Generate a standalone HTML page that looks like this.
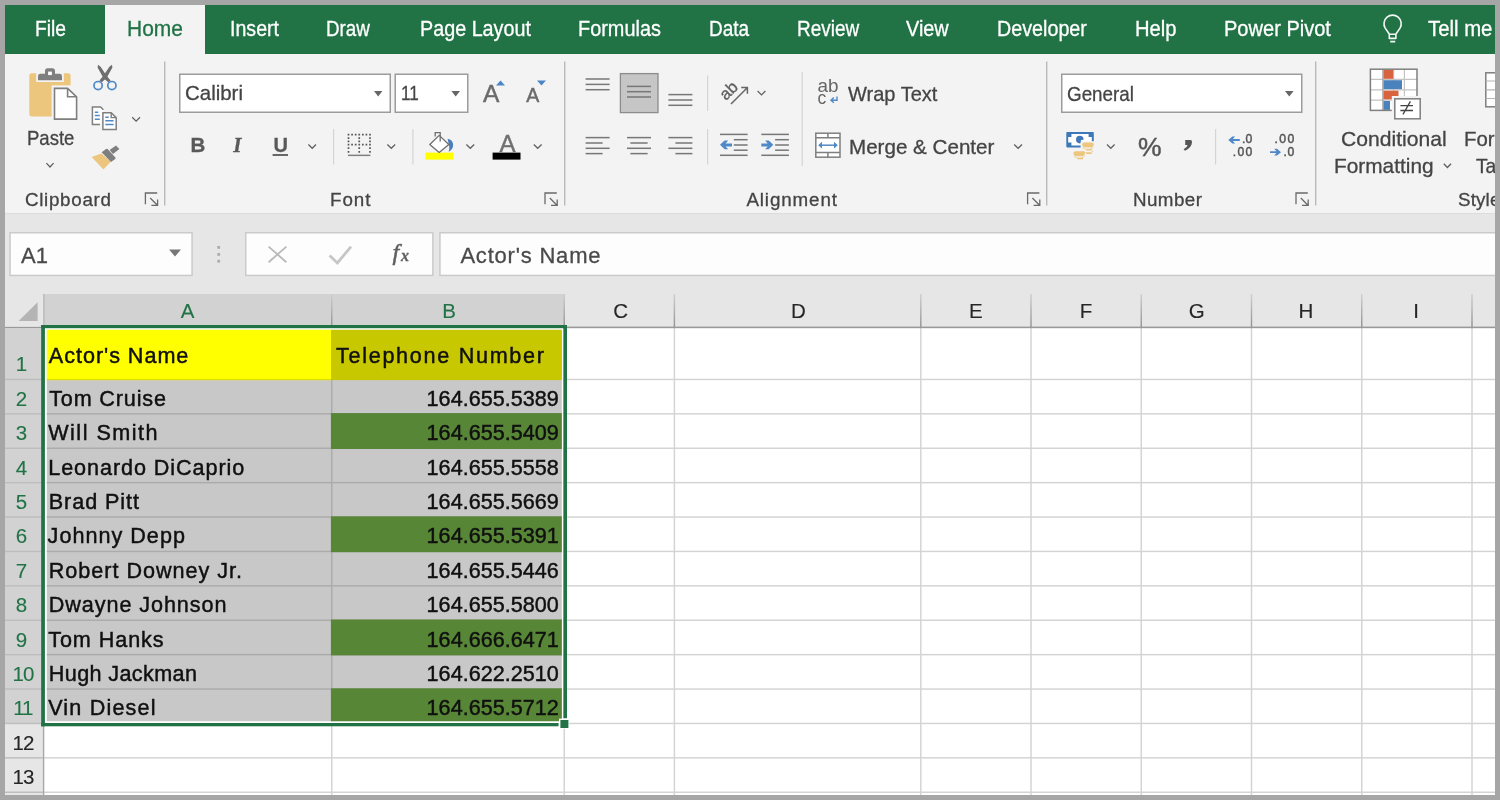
<!DOCTYPE html>
<html><head><meta charset="utf-8"><title>Excel</title>
<style>
html,body{margin:0;padding:0;}
body{width:1500px;height:800px;overflow:hidden;background:#a6a6a6;position:relative;font-family:"Liberation Sans",sans-serif;}
.a{position:absolute;display:block;}
.t{position:absolute;white-space:pre;display:block;}
#w{filter:blur(0.45px);position:absolute;left:5px;top:5px;width:1490px;height:790px;overflow:hidden;background:#fff;}
#o{position:absolute;left:-5px;top:-5px;width:1500px;height:800px;}
</style></head><body><div id="w"><div id="o">
<svg class="a" style="left:0;top:0" width="1500" height="800" viewBox="0 0 1500 800">
<defs><linearGradient id="hg" x1="0" y1="0" x2="0" y2="1"><stop offset="0" stop-color="#cfcfcf"/><stop offset="1" stop-color="#929292"/></linearGradient></defs>
<rect x="5" y="5" width="1490" height="49.3" fill="#217346"/>
<rect x="105" y="5" width="100" height="49.3" fill="#f3f3f3"/>
<rect x="5" y="54" width="1490" height="159" fill="#f3f3f3"/>
<rect x="5" y="213" width="1490" height="1" fill="#dcdcdc"/>
<rect x="164" y="61.5" width="1.4" height="144" fill="#b9b9b9"/>
<rect x="564" y="61.5" width="1.4" height="144" fill="#b9b9b9"/>
<rect x="1046" y="61.5" width="1.4" height="144" fill="#b9b9b9"/>
<rect x="1315" y="61.5" width="1.4" height="144" fill="#b9b9b9"/>
<rect x="333" y="129" width="1.2" height="35.5" fill="#d4d4d4"/>
<rect x="412.3" y="129" width="1.2" height="35.5" fill="#d4d4d4"/>
<rect x="707" y="75.5" width="1.2" height="35.5" fill="#d4d4d4"/>
<rect x="707" y="129" width="1.2" height="35.5" fill="#d4d4d4"/>
<rect x="801.6" y="72" width="1.2" height="94" fill="#d4d4d4"/>
<rect x="1215" y="129" width="1.2" height="35.5" fill="#d4d4d4"/>
<rect x="179.75" y="74.25" width="210.5" height="38" fill="#fff" stroke="#9c9c9c" stroke-width="1.5"/>
<rect x="395.25" y="74.25" width="72.5" height="38" fill="#fff" stroke="#9c9c9c" stroke-width="1.5"/>
<rect x="1061.75" y="74.25" width="240" height="38" fill="#fff" stroke="#9c9c9c" stroke-width="1.5"/>
<g transform="translate(374,91)"><path d="M0 0H8.4L4.2 5.4Z" fill="#666"/></g>
<g transform="translate(451.4,91)"><path d="M0 0H8.6L4.3 5.4Z" fill="#666"/></g>
<g transform="translate(1285,91)"><path d="M0 0H8.6L4.3 5.4Z" fill="#666"/></g>
<rect x="272.6" y="154.1" width="15.4" height="1.8" fill="#595959"/>
<rect x="5" y="214" width="1490" height="80" fill="#e6e6e6"/>
<rect x="10.05" y="232.75" width="182" height="42.7" fill="#fdfdfd" stroke="#cacaca" stroke-width="1.5"/>
<rect x="245.75" y="232.75" width="187.1" height="42.7" fill="#fdfdfd" stroke="#cacaca" stroke-width="1.5"/>
<rect x="439.95" y="232.75" width="1059.3" height="42.7" fill="#fdfdfd" stroke="#cacaca" stroke-width="1.5"/>
<g transform="translate(169,249.6)"><path d="M0 0H12L6 6.8Z" fill="#777"/></g>
<rect x="217.3" y="246" width="2.8" height="2.8" fill="#adadad"/>
<rect x="217.3" y="253" width="2.8" height="2.8" fill="#adadad"/>
<rect x="217.3" y="259.8" width="2.8" height="2.8" fill="#adadad"/>
<rect x="5" y="294" width="1490" height="501" fill="#fff"/>
<rect x="331.03" y="327" width="1.44" height="468" fill="#d3d3d3"/>
<rect x="563.53" y="327" width="1.44" height="468" fill="#d3d3d3"/>
<rect x="673.68" y="327" width="1.44" height="468" fill="#d3d3d3"/>
<rect x="920.08" y="327" width="1.44" height="468" fill="#d3d3d3"/>
<rect x="1030.28" y="327" width="1.44" height="468" fill="#d3d3d3"/>
<rect x="1140.53" y="327" width="1.44" height="468" fill="#d3d3d3"/>
<rect x="1250.78" y="327" width="1.44" height="468" fill="#d3d3d3"/>
<rect x="1361.03" y="327" width="1.44" height="468" fill="#d3d3d3"/>
<rect x="1471.28" y="327" width="1.44" height="468" fill="#d3d3d3"/>
<rect x="1581.28" y="327" width="1.44" height="468" fill="#d3d3d3"/>
<rect x="43" y="378.73" width="1452" height="1.44" fill="#d3d3d3"/>
<rect x="43" y="413.13" width="1452" height="1.44" fill="#d3d3d3"/>
<rect x="43" y="447.53" width="1452" height="1.44" fill="#d3d3d3"/>
<rect x="43" y="481.93" width="1452" height="1.44" fill="#d3d3d3"/>
<rect x="43" y="516.33" width="1452" height="1.44" fill="#d3d3d3"/>
<rect x="43" y="550.73" width="1452" height="1.44" fill="#d3d3d3"/>
<rect x="43" y="585.13" width="1452" height="1.44" fill="#d3d3d3"/>
<rect x="43" y="619.53" width="1452" height="1.44" fill="#d3d3d3"/>
<rect x="43" y="653.93" width="1452" height="1.44" fill="#d3d3d3"/>
<rect x="43" y="688.33" width="1452" height="1.44" fill="#d3d3d3"/>
<rect x="43" y="722.73" width="1452" height="1.44" fill="#d3d3d3"/>
<rect x="43" y="757.13" width="1452" height="1.44" fill="#d3d3d3"/>
<rect x="43" y="791.53" width="1452" height="1.44" fill="#d3d3d3"/>
<rect x="5" y="294" width="1490" height="33" fill="#e6e6e6"/>
<rect x="44" y="294" width="521" height="33" fill="#d2d2d2"/>
<rect x="5" y="326.6" width="1490" height="1.6" fill="#999"/>
<rect x="331.03" y="294" width="1.44" height="33" fill="url(#hg)"/>
<rect x="563.53" y="294" width="1.44" height="33" fill="url(#hg)"/>
<rect x="673.68" y="294" width="1.44" height="33" fill="url(#hg)"/>
<rect x="920.08" y="294" width="1.44" height="33" fill="url(#hg)"/>
<rect x="1030.28" y="294" width="1.44" height="33" fill="url(#hg)"/>
<rect x="1140.53" y="294" width="1.44" height="33" fill="url(#hg)"/>
<rect x="1250.78" y="294" width="1.44" height="33" fill="url(#hg)"/>
<rect x="1361.03" y="294" width="1.44" height="33" fill="url(#hg)"/>
<rect x="1471.28" y="294" width="1.44" height="33" fill="url(#hg)"/>
<rect x="1581.28" y="294" width="1.44" height="33" fill="url(#hg)"/>
<rect x="5" y="328" width="38" height="467" fill="#e6e6e6"/>
<rect x="5" y="328" width="38" height="395" fill="#d2d2d2"/>
<rect x="42.9" y="328" width="1.4" height="467" fill="#a8a8a8"/>
<rect x="5" y="378.73" width="38" height="1.44" fill="#bdbdbd"/>
<rect x="5" y="413.13" width="38" height="1.44" fill="#bdbdbd"/>
<rect x="5" y="447.53" width="38" height="1.44" fill="#bdbdbd"/>
<rect x="5" y="481.93" width="38" height="1.44" fill="#bdbdbd"/>
<rect x="5" y="516.33" width="38" height="1.44" fill="#bdbdbd"/>
<rect x="5" y="550.73" width="38" height="1.44" fill="#bdbdbd"/>
<rect x="5" y="585.13" width="38" height="1.44" fill="#bdbdbd"/>
<rect x="5" y="619.53" width="38" height="1.44" fill="#bdbdbd"/>
<rect x="5" y="653.93" width="38" height="1.44" fill="#bdbdbd"/>
<rect x="5" y="688.33" width="38" height="1.44" fill="#bdbdbd"/>
<rect x="5" y="722.73" width="38" height="1.44" fill="#bdbdbd"/>
<rect x="5" y="757.13" width="38" height="1.44" fill="#bdbdbd"/>
<rect x="5" y="791.53" width="38" height="1.44" fill="#bdbdbd"/>
<rect x="5" y="294" width="38.2" height="32.7" fill="#e6e6e6"/>
<rect x="43.2" y="294" width="1.4" height="31" fill="#b8b8b8"/>
<g transform="translate(17,301)"><path d="M20.6 1.2V20H1.6Z" fill="#b4b4b4"/></g>
<rect x="44" y="328" width="519" height="395" fill="#fff"/>
<rect x="46.8" y="329.8" width="515" height="391.4" fill="#c8c8c8"/>
<rect x="46.8" y="413.13" width="515" height="1.44" fill="#ababab"/>
<rect x="46.8" y="447.53" width="515" height="1.44" fill="#ababab"/>
<rect x="46.8" y="481.93" width="515" height="1.44" fill="#ababab"/>
<rect x="46.8" y="516.33" width="515" height="1.44" fill="#ababab"/>
<rect x="46.8" y="550.73" width="515" height="1.44" fill="#ababab"/>
<rect x="46.8" y="585.13" width="515" height="1.44" fill="#ababab"/>
<rect x="46.8" y="619.53" width="515" height="1.44" fill="#ababab"/>
<rect x="46.8" y="653.93" width="515" height="1.44" fill="#ababab"/>
<rect x="46.8" y="688.33" width="515" height="1.44" fill="#ababab"/>
<rect x="331.03" y="379" width="1.44" height="342.2" fill="#ababab"/>
<rect x="46.8" y="329.8" width="284.2" height="50.3" fill="#ffff00"/>
<rect x="46.8" y="378.9" width="284.2" height="1.2" fill="#dede00"/>
<rect x="331" y="329.8" width="230.8" height="50.3" fill="#c8c800"/>
<rect x="330.9" y="413.1" width="230.9" height="35.9" fill="#578637"/>
<rect x="330.9" y="516.3" width="230.9" height="35.9" fill="#578637"/>
<rect x="330.9" y="619.5" width="230.9" height="35.9" fill="#578637"/>
<rect x="330.9" y="688.3" width="230.9" height="32.9" fill="#578637"/>
<rect x="41.2" y="325" width="525.8" height="3.2" fill="#217346"/>
<rect x="41.2" y="325" width="3.7" height="401.3" fill="#217346"/>
<rect x="41.2" y="723" width="517.3" height="3.3" fill="#217346"/>
<rect x="563.4" y="325" width="3.6" height="393.3" fill="#217346"/>
<rect x="559" y="718.6" width="10" height="10" fill="#fff"/>
<rect x="560.4" y="720" width="8" height="8" fill="#217346"/>
<g transform="translate(496,80.4)"><path d="M0 5.2L4.5 0L9 5.2Z" fill="#4a86c5"/></g>
<g transform="translate(537,80.4)"><path d="M0 0H9L4.5 5.2Z" fill="#4a86c5"/></g>
<rect x="29.3" y="73.2" width="41.3" height="43.2" rx="2.6" fill="#edc67e"/>
<rect x="36.2" y="72" width="27.6" height="10" fill="#f3f3f3"/>
<rect x="51.6" y="85.4" width="22" height="34" fill="#f3f3f3"/>
<path d="M38 80.2V76.2Q38 73.8 40.4 73.8H45V71Q45 68.3 47.7 68.3H52.3Q55 68.3 55 71V73.8H59.6Q62 73.8 62 76.2V80.2Z" fill="#7f7f7f"/>
<rect x="48.1" y="71.6" width="3.8" height="3.5" fill="#fff"/>
<path d="M54.5 88.4H67.6L76.6 96.8V119.1H54.5Z" fill="#fff" stroke="#7f7f7f" stroke-width="1.6"/>
<path d="M67.6 88.4V96.8H76.6" fill="none" stroke="#7f7f7f" stroke-width="1.6"/>
<path d="M46.4 163.1L50 167L53.6 163.1" fill="none" stroke="#606060" stroke-width="1.25"/>
<path d="M98 64.8L100.6 66.8L106.8 76L110.6 80.4L108.2 82.2L103.4 78L97.6 67.6Z" fill="#6e6e6e"/>
<path d="M112 64.8L109.4 66.8L103.2 76L99.4 80.4L101.8 82.2L106.6 78L112.4 67.6Z" fill="#6e6e6e"/>
<circle cx="98.1" cy="85.6" r="4.1" fill="none" stroke="#5089c7" stroke-width="1.7"/>
<circle cx="111.9" cy="85.6" r="4.1" fill="none" stroke="#5089c7" stroke-width="1.7"/>
<path d="M100 124.4H92.4V107H100.6L103.4 109.8" fill="#fff" stroke="#7f7f7f" stroke-width="1.5"/>
<path d="M94.8 112.2H98.3M94.8 115.6H99.8M94.8 119.2H99.8" stroke="#5089c7" stroke-width="1.5"/>
<path d="M102.9 112.8H111.2L116.2 117.6V129.4H102.9Z" fill="#fff" stroke="#7f7f7f" stroke-width="1.5"/>
<path d="M111.2 112.8V117.6H116.2" fill="none" stroke="#7f7f7f" stroke-width="1.4"/>
<path d="M105.3 117.3H108.8M105.3 120.8H113.6M105.3 124.5H113.6" stroke="#5089c7" stroke-width="1.5"/>
<path d="M132.2 117.2L136.1 121.1L140 117.2" fill="none" stroke="#606060" stroke-width="1.25"/>
<path d="M91.7 157L101.3 153.5L110.8 161.7L103.4 169.6Z" fill="#edc67e"/>
<path d="M101.6 152.2L106.4 148.8Q107 148.4 107.6 149L115.4 157.6Q116 158.4 115.2 159L111 162Z" fill="#7f7f7f"/>
<path d="M109.6 150L116 145.6L119.4 149L113 154Z" fill="#7f7f7f"/>
<path d="M145.4 204.2V193H157.2M150.2 198L157.4 205.2M157.6 199.4V205.4H151.4" fill="none" stroke="#6a6a6a" stroke-width="1.3"/>
<path d="M545 204.2V193H556.8M549.8 198L557 205.2M557.2 199.4V205.4H551" fill="none" stroke="#6a6a6a" stroke-width="1.3"/>
<path d="M1027.6 204.2V193H1039.4M1032.4 198L1039.6 205.2M1039.8 199.4V205.4H1033.6" fill="none" stroke="#6a6a6a" stroke-width="1.3"/>
<path d="M1296 204.2V193H1307.8M1300.8 198L1308 205.2M1308.2 199.4V205.4H1302" fill="none" stroke="#6a6a6a" stroke-width="1.3"/>
<path d="M308.4 144.5L312.2 148.3L316 144.5" fill="none" stroke="#606060" stroke-width="1.25"/>
<path d="M387.4 144.5L391.3 148.3L395.2 144.5" fill="none" stroke="#606060" stroke-width="1.25"/>
<path d="M466.4 144.5L470.3 148.3L474.2 144.5" fill="none" stroke="#606060" stroke-width="1.25"/>
<path d="M533.8 144.5L537.7 148.3L541.6 144.5" fill="none" stroke="#606060" stroke-width="1.25"/>
<path d="M347.65 133.85h1.7v1.7h-1.7zM351.23 133.85h1.7v1.7h-1.7zM354.81 133.85h1.7v1.7h-1.7zM358.39 133.85h1.7v1.7h-1.7zM361.97 133.85h1.7v1.7h-1.7zM365.55 133.85h1.7v1.7h-1.7zM369.13 133.85h1.7v1.7h-1.7zM347.65 137.25h1.7v1.7h-1.7zM358.39 137.25h1.7v1.7h-1.7zM369.13 137.25h1.7v1.7h-1.7zM347.65 140.45h1.7v1.7h-1.7zM358.39 140.45h1.7v1.7h-1.7zM369.13 140.45h1.7v1.7h-1.7zM347.65 143.75h1.7v1.7h-1.7zM351.23 143.75h1.7v1.7h-1.7zM354.81 143.75h1.7v1.7h-1.7zM358.39 143.75h1.7v1.7h-1.7zM361.97 143.75h1.7v1.7h-1.7zM365.55 143.75h1.7v1.7h-1.7zM369.13 143.75h1.7v1.7h-1.7zM347.65 147.25h1.7v1.7h-1.7zM358.39 147.25h1.7v1.7h-1.7zM369.13 147.25h1.7v1.7h-1.7zM347.65 151.05h1.7v1.7h-1.7zM358.39 151.05h1.7v1.7h-1.7zM369.13 151.05h1.7v1.7h-1.7z" fill="#585858"/>
<rect x="348" y="154.6" width="22.4" height="1.5" fill="#7f7f7f"/>
<rect x="425.4" y="152.6" width="28.1" height="7" fill="#ffff00"/>
<path d="M447.6 138.8C451.8 139.6 453.8 143 453 146.6C452.6 148.8 451 150.8 448.6 151.8C449.6 149 449.4 147 448.8 144.6Z" fill="#4a7fbd"/>
<path d="M429.8 144.5L439.2 135.4L448.8 144.5L439.2 152.4Z" fill="#fff" stroke="#6e6e6e" stroke-width="1.3" stroke-linejoin="round"/>
<path d="M440.2 141.4V132.6H435.2V136.4" fill="none" stroke="#6e6e6e" stroke-width="1.3"/>
<rect x="492.6" y="152.6" width="27.9" height="7" fill="#000"/>
<rect x="585.6" y="78.25" width="24" height="1.5" fill="#777"/>
<rect x="585.6" y="83.65" width="24" height="1.5" fill="#777"/>
<rect x="585.6" y="88.95" width="24" height="1.5" fill="#777"/>
<rect x="620.4" y="73.6" width="37.6" height="39" fill="#c6c6c6" stroke="#8c8c8c" stroke-width="1.3"/>
<rect x="627" y="85.65" width="24" height="1.5" fill="#777"/>
<rect x="627" y="90.95" width="24" height="1.5" fill="#777"/>
<rect x="627" y="96.25" width="24" height="1.5" fill="#777"/>
<rect x="668.4" y="93.85" width="24" height="1.5" fill="#777"/>
<rect x="668.4" y="99.25" width="24" height="1.5" fill="#777"/>
<rect x="668.4" y="104.55" width="24" height="1.5" fill="#777"/>
<rect x="585.6" y="136.85" width="24" height="1.5" fill="#777"/>
<rect x="627" y="136.85" width="24" height="1.5" fill="#777"/>
<rect x="668.4" y="136.85" width="24" height="1.5" fill="#777"/>
<rect x="585.6" y="142.25" width="17" height="1.5" fill="#777"/>
<rect x="630.4" y="142.25" width="17.2" height="1.5" fill="#777"/>
<rect x="675.4" y="142.25" width="17" height="1.5" fill="#777"/>
<rect x="585.6" y="147.55" width="24" height="1.5" fill="#777"/>
<rect x="627" y="147.55" width="24" height="1.5" fill="#777"/>
<rect x="668.4" y="147.55" width="24" height="1.5" fill="#777"/>
<rect x="585.6" y="152.85" width="17" height="1.5" fill="#777"/>
<rect x="630.4" y="152.85" width="17.2" height="1.5" fill="#777"/>
<rect x="675.4" y="152.85" width="17" height="1.5" fill="#777"/>
<text x="0" y="0" transform="translate(726,101) rotate(-45)" font-family="Liberation Sans" font-size="16.5" fill="#606060" stroke="#606060" stroke-width="0.35">ab</text>
<path d="M731 104L747 88M741.2 87.6H747.4V93.8" fill="none" stroke="#666" stroke-width="1.5"/>
<path d="M757.6 91L761.5 94.9L765.4 91" fill="none" stroke="#606060" stroke-width="1.25"/>
<text x="817.4" y="91.9" font-family="Liberation Sans" font-size="17.5" fill="#666" textLength="21" lengthAdjust="spacingAndGlyphs">ab</text>
<text x="817.6" y="103.7" font-family="Liberation Sans" font-size="17.5" fill="#666">c</text>
<path d="M837 96.4V100.2H831.2M833.8 97.6L831 100.2L833.8 102.8" fill="none" stroke="#5089c7" stroke-width="1.4"/>
<rect x="720" y="133.65" width="27.6" height="1.5" fill="#777"/>
<rect x="720" y="154.55" width="27.6" height="1.5" fill="#777"/>
<rect x="733.8" y="138.95" width="13.8" height="1.5" fill="#777"/>
<rect x="733.8" y="144.25" width="13.8" height="1.5" fill="#777"/>
<rect x="733.8" y="149.45" width="13.8" height="1.5" fill="#777"/>
<path d="M732 143.4H725.6L728.2 140.6H724.6L720 144.8L724.6 149.2H728.2L725.6 146.4H732Z" fill="#5089c7"/>
<rect x="761.3" y="133.65" width="27.6" height="1.5" fill="#777"/>
<rect x="761.3" y="154.55" width="27.6" height="1.5" fill="#777"/>
<rect x="775.1" y="138.95" width="13.8" height="1.5" fill="#777"/>
<rect x="775.1" y="144.25" width="13.8" height="1.5" fill="#777"/>
<rect x="775.1" y="149.45" width="13.8" height="1.5" fill="#777"/>
<path d="M761.3 143.4H767.7L765.1 140.6H768.7L773.3 144.8L768.7 149.2H765.1L767.7 146.4H761.3Z" fill="#5089c7"/>
<rect x="815.8" y="133.2" width="24.2" height="24" fill="#fff" stroke="#7f7f7f" stroke-width="1.5"/>
<path d="M815.8 137.8H840M815.8 152.6H840M827.9 133.2V137.8M827.9 152.6V157.2" stroke="#7f7f7f" stroke-width="1.5" fill="none"/>
<path d="M820 145.2H836" stroke="#5089c7" stroke-width="1.5"/><path d="M822 141.8L818.2 145.2L822 148.6ZM834 141.8L837.8 145.2L834 148.6Z" fill="#5089c7"/>
<path d="M1014.2 144.5L1018.1 148.3L1022 144.5" fill="none" stroke="#606060" stroke-width="1.25"/>
<rect x="1066.3" y="132" width="27.5" height="15.4" rx="0.8" fill="#3f78b8"/>
<path d="M1071.4 134H1088.6V137H1091.8V142.4H1088.6V145.6H1071.4V142.4H1068.2V137H1071.4Z" fill="#fff"/>
<circle cx="1079.8" cy="139.6" r="3.8" fill="#3f78b8"/>
<path d="M1080.6 140.2L1084.4 139.4L1082.6 143.6Z" fill="#fff"/>
<rect x="1080.6" y="141.2" width="14.4" height="14" fill="#f3f3f3"/>
<rect x="1072" y="150" width="14.2" height="10.4" fill="#f3f3f3"/>
<rect x="1082.2" y="142.4" width="11.6" height="4.6" rx="2.2" fill="#edc67e"/>
<rect x="1083.8" y="144.4" width="8.4" height="3" fill="#edc67e"/>
<path d="M1082.6 147.6Q1088 151.2 1093.4 147.6" fill="none" stroke="#edc67e" stroke-width="0.9" opacity="0.75"/>
<rect x="1086.2" y="149" width="5.6" height="1.5" fill="#edc67e"/>
<path d="M1082.6 151.1Q1088 154.7 1093.4 151.1" fill="none" stroke="#edc67e" stroke-width="0.9" opacity="0.75"/>
<rect x="1086.2" y="152.5" width="5.6" height="1.5" fill="#edc67e"/>
<rect x="1073.4" y="151.2" width="11.6" height="4.6" rx="2.2" fill="#edc67e"/>
<rect x="1075" y="153.2" width="8.4" height="3" fill="#edc67e"/>
<path d="M1073.8 156.4Q1079.2 160 1084.6 156.4" fill="none" stroke="#edc67e" stroke-width="0.9" opacity="0.75"/>
<rect x="1077.4" y="157.8" width="5.6" height="1.5" fill="#edc67e"/>
<path d="M1107 144.5L1110.8 148.3L1114.6 144.5" fill="none" stroke="#606060" stroke-width="1.25"/>
<path d="M1185.2 140H1190.4Q1192.2 140 1192 142.2Q1191.6 147.6 1185 150.8L1183.6 149.2Q1187.4 147.2 1187.6 145H1185.2Z" fill="#555"/>
<path d="M1239.8 139.1H1232.9L1235.1 136.6H1232.3L1228.3 140L1232.3 143.4H1235.1L1232.9 140.9H1239.8Z" fill="#5089c7"/>
<path d="M1270 151.3H1276.4L1274.2 148.8H1277L1281 152.2L1277 155.6H1274.2L1276.4 153.1H1270Z" fill="#5089c7"/>
<rect x="1370.4" y="69.2" width="46.6" height="41.2" fill="#fff"/>
<path d="M1370.4 79.4H1417M1370.4 89.9H1417M1370.4 100.2H1417M1404.4 69.2V110.4M1393.6 69.2V110.4" stroke="#c3c3c3" stroke-width="1.2" fill="none"/>
<path d="M1382.8 69.2V110.4" stroke="#a6a6a6" stroke-width="1.2" fill="none"/>
<rect x="1383.4" y="69.9" width="9.8" height="8.9" fill="#d9623f"/>
<rect x="1383.4" y="80.2" width="18.6" height="8.9" fill="#4a82bd"/>
<rect x="1383.4" y="90.7" width="15.1" height="8.7" fill="#d9623f"/>
<rect x="1383.4" y="101" width="6.6" height="8.9" fill="#4a82bd"/>
<rect x="1370.4" y="69.2" width="46.6" height="41.2" fill="none" stroke="#7f7f7f" stroke-width="1.5"/>
<rect x="1391.8" y="96" width="30" height="24" fill="#f3f3f3"/>
<rect x="1394.8" y="98.8" width="25.4" height="20" fill="#fff" stroke="#7f7f7f" stroke-width="1.5"/>
<path d="M1400.4 105.6H1413M1400.4 110.5H1413M1410.4 101.4L1403 114.4" stroke="#444" stroke-width="1.3" fill="none"/>
<path d="M1443.8 163.8L1447.4 167.5L1451 163.8" fill="none" stroke="#606060" stroke-width="1.4"/>
<rect x="1485.8" y="72.8" width="30" height="34" fill="#fff" stroke="#7f7f7f" stroke-width="1.5"/>
<path d="M1485.8 81H1516M1485.8 89.9H1516M1485.8 98.5H1516" stroke="#b5b5b5" stroke-width="1.2" fill="none"/>
<path d="M1389.4 34.2L1385.2 28.1A8.6 8.6 0 1 1 1400 28.1L1395.8 34.2M1389.3 34.2H1395.9V38.4H1389.3ZM1390.2 41.6H1395.2" fill="none" stroke="#f2f7f4" stroke-width="1.6" stroke-linejoin="round"/>
<path d="M268.6 246.6L286.4 262.2M286.4 246.6L268.6 262.2" stroke="#b9b9b9" stroke-width="1.8" fill="none"/>
<path d="M329.6 255.6L337.4 263L351 246.6" stroke="#c6c6c6" stroke-width="2.8" fill="none"/>
</svg>
<span class="t" style="left:35.00px;top:18.00px;font-size:21.2px;line-height:21.2px;color:#fff;transform:scaleX(0.9082);transform-origin:0 0;-webkit-text-stroke:0.3px #fff;">File</span>
<span class="t" style="left:127.00px;top:18.00px;font-size:21.2px;line-height:21.2px;color:#217346;transform:scaleX(0.9893);transform-origin:0 0;-webkit-text-stroke:0.3px #217346;">Home</span>
<span class="t" style="left:230.00px;top:18.00px;font-size:21.2px;line-height:21.2px;color:#fff;transform:scaleX(0.9245);transform-origin:0 0;-webkit-text-stroke:0.3px #fff;">Insert</span>
<span class="t" style="left:326.00px;top:18.00px;font-size:21.2px;line-height:21.2px;color:#fff;transform:scaleX(0.8889);transform-origin:0 0;-webkit-text-stroke:0.3px #fff;">Draw</span>
<span class="t" style="left:419.50px;top:18.00px;font-size:21.2px;line-height:21.2px;color:#fff;transform:scaleX(0.9325);transform-origin:0 0;-webkit-text-stroke:0.3px #fff;">Page Layout</span>
<span class="t" style="left:578.00px;top:18.00px;font-size:21.2px;line-height:21.2px;color:#fff;transform:scaleX(0.9389);transform-origin:0 0;-webkit-text-stroke:0.3px #fff;">Formulas</span>
<span class="t" style="left:708.75px;top:18.00px;font-size:21.2px;line-height:21.2px;color:#fff;transform:scaleX(0.8977);transform-origin:0 0;-webkit-text-stroke:0.3px #fff;">Data</span>
<span class="t" style="left:796.75px;top:18.00px;font-size:21.2px;line-height:21.2px;color:#fff;transform:scaleX(0.8952);transform-origin:0 0;-webkit-text-stroke:0.3px #fff;">Review</span>
<span class="t" style="left:906.00px;top:18.00px;font-size:21.2px;line-height:21.2px;color:#fff;transform:scaleX(0.9379);transform-origin:0 0;-webkit-text-stroke:0.3px #fff;">View</span>
<span class="t" style="left:996.75px;top:18.00px;font-size:21.2px;line-height:21.2px;color:#fff;transform:scaleX(0.9310);transform-origin:0 0;-webkit-text-stroke:0.3px #fff;">Developer</span>
<span class="t" style="left:1134.50px;top:18.00px;font-size:21.2px;line-height:21.2px;color:#fff;transform:scaleX(0.9526);transform-origin:0 0;-webkit-text-stroke:0.3px #fff;">Help</span>
<span class="t" style="left:1224.00px;top:18.00px;font-size:21.2px;line-height:21.2px;color:#fff;transform:scaleX(0.9460);transform-origin:0 0;-webkit-text-stroke:0.3px #fff;">Power Pivot</span>
<span class="t" style="left:1427.50px;top:18.00px;font-size:21.2px;line-height:21.2px;color:#fff;transform:scaleX(0.9598);transform-origin:0 0;-webkit-text-stroke:0.3px #fff;">Tell me</span>
<span class="t" style="left:27.00px;top:127.00px;font-size:21px;line-height:21px;color:#444;transform:scaleX(0.8834);transform-origin:0 0;-webkit-text-stroke:0.3px #444;">Paste</span>
<span class="t" style="left:25.00px;top:191.00px;font-size:18.8px;line-height:18.8px;color:#444;letter-spacing:0.692px;-webkit-text-stroke:0.3px #444;">Clipboard</span>
<span class="t" style="left:330.00px;top:191.00px;font-size:18.8px;line-height:18.8px;color:#444;letter-spacing:0.933px;-webkit-text-stroke:0.3px #444;">Font</span>
<span class="t" style="left:746.40px;top:191.00px;font-size:18.8px;line-height:18.8px;color:#444;letter-spacing:0.879px;-webkit-text-stroke:0.3px #444;">Alignment</span>
<span class="t" style="left:1133.00px;top:191.00px;font-size:18.8px;line-height:18.8px;color:#444;letter-spacing:0.433px;-webkit-text-stroke:0.3px #444;">Number</span>
<span class="t" style="left:1458.00px;top:191.00px;font-size:18.8px;line-height:18.8px;color:#444;letter-spacing:0.154px;-webkit-text-stroke:0.3px #444;">Styles</span>
<span class="t" style="left:847.60px;top:83.00px;font-size:21px;line-height:21px;color:#444;transform:scaleX(0.9534);transform-origin:0 0;-webkit-text-stroke:0.3px #444;">Wrap Text</span>
<span class="t" style="left:848.60px;top:136.00px;font-size:21px;line-height:21px;color:#444;transform:scaleX(0.9807);transform-origin:0 0;-webkit-text-stroke:0.3px #444;">Merge &amp; Center</span>
<span class="t" style="left:1341.00px;top:128.00px;font-size:21px;line-height:21px;color:#444;transform:scaleX(1.0047);transform-origin:0 0;-webkit-text-stroke:0.3px #444;">Conditional</span>
<span class="t" style="left:1334.00px;top:155.00px;font-size:21px;line-height:21px;color:#444;transform:scaleX(0.9922);transform-origin:0 0;-webkit-text-stroke:0.3px #444;">Formatting</span>
<span class="t" style="left:1463.60px;top:128.00px;font-size:21px;line-height:21px;color:#444;transform:scaleX(0.9689);transform-origin:0 0;-webkit-text-stroke:0.3px #444;">Format</span>
<span class="t" style="left:1476.00px;top:155.00px;font-size:21px;line-height:21px;color:#444;transform:scaleX(0.9165);transform-origin:0 0;-webkit-text-stroke:0.3px #444;">Table</span>
<span class="t" style="left:185.00px;top:82.00px;font-size:21px;line-height:21px;color:#444;transform:scaleX(0.9742);transform-origin:0 0;-webkit-text-stroke:0.3px #444;">Calibri</span>
<span class="t" style="left:400.60px;top:82.00px;font-size:21px;line-height:21px;color:#444;transform:scaleX(0.8150);transform-origin:0 0;-webkit-text-stroke:0.3px #444;">11</span>
<span class="t" style="left:1067.40px;top:83.00px;font-size:21px;line-height:21px;color:#444;transform:scaleX(0.8962);transform-origin:0 0;-webkit-text-stroke:0.3px #444;">General</span>
<span class="t" style="left:190.60px;top:135.00px;font-size:20.5px;line-height:20.5px;color:#595959;font-weight:bold;-webkit-text-stroke:0.3px #595959;">B</span>
<span class="t" style="left:233.21px;top:135.00px;font-size:21px;line-height:21px;color:#595959;font-weight:bold;font-style:italic;font-family:'Liberation Serif',serif;-webkit-text-stroke:0.3px #595959;">I</span>
<span class="t" style="left:273.40px;top:135.00px;font-size:20px;line-height:20px;color:#595959;font-weight:bold;-webkit-text-stroke:0.3px #595959;">U</span>
<span class="t" style="left:21.00px;top:245.00px;font-size:22px;line-height:22px;color:#4a4a4a;letter-spacing:0.050px;-webkit-text-stroke:0.3px #4a4a4a;">A1</span>
<span class="t" style="left:460.40px;top:245.00px;font-size:22px;line-height:22px;color:#4a4a4a;letter-spacing:0.796px;-webkit-text-stroke:0.3px #4a4a4a;">Actor's Name</span>
<span class="t" style="left:180.63px;top:301.00px;font-size:20.5px;line-height:20.5px;color:#217346;-webkit-text-stroke:0.12px #217346;">A</span>
<span class="t" style="left:442.18px;top:301.00px;font-size:20.5px;line-height:20.5px;color:#217346;-webkit-text-stroke:0.12px #217346;">B</span>
<span class="t" style="left:613.32px;top:301.00px;font-size:20.5px;line-height:20.5px;color:#262626;-webkit-text-stroke:0.12px #262626;">C</span>
<span class="t" style="left:791.12px;top:301.00px;font-size:20.5px;line-height:20.5px;color:#262626;-webkit-text-stroke:0.12px #262626;">D</span>
<span class="t" style="left:968.88px;top:301.00px;font-size:20.5px;line-height:20.5px;color:#262626;-webkit-text-stroke:0.12px #262626;">E</span>
<span class="t" style="left:1079.75px;top:301.00px;font-size:20.5px;line-height:20.5px;color:#262626;-webkit-text-stroke:0.12px #262626;">F</span>
<span class="t" style="left:1188.71px;top:301.00px;font-size:20.5px;line-height:20.5px;color:#262626;-webkit-text-stroke:0.12px #262626;">G</span>
<span class="t" style="left:1298.62px;top:301.00px;font-size:20.5px;line-height:20.5px;color:#262626;-webkit-text-stroke:0.12px #262626;">H</span>
<span class="t" style="left:1413.13px;top:301.00px;font-size:20.5px;line-height:20.5px;color:#262626;-webkit-text-stroke:0.12px #262626;">I</span>
<span class="t" style="left:15.71px;top:354.00px;font-size:20.5px;line-height:20.5px;color:#217346;-webkit-text-stroke:0.12px #217346;">1</span>
<span class="t" style="left:15.71px;top:389.00px;font-size:20.5px;line-height:20.5px;color:#217346;-webkit-text-stroke:0.12px #217346;">2</span>
<span class="t" style="left:15.71px;top:423.00px;font-size:20.5px;line-height:20.5px;color:#217346;-webkit-text-stroke:0.12px #217346;">3</span>
<span class="t" style="left:15.71px;top:458.00px;font-size:20.5px;line-height:20.5px;color:#217346;-webkit-text-stroke:0.12px #217346;">4</span>
<span class="t" style="left:15.71px;top:492.00px;font-size:20.5px;line-height:20.5px;color:#217346;-webkit-text-stroke:0.12px #217346;">5</span>
<span class="t" style="left:15.71px;top:526.00px;font-size:20.5px;line-height:20.5px;color:#217346;-webkit-text-stroke:0.12px #217346;">6</span>
<span class="t" style="left:15.71px;top:561.00px;font-size:20.5px;line-height:20.5px;color:#217346;-webkit-text-stroke:0.12px #217346;">7</span>
<span class="t" style="left:15.71px;top:595.00px;font-size:20.5px;line-height:20.5px;color:#217346;-webkit-text-stroke:0.12px #217346;">8</span>
<span class="t" style="left:15.71px;top:630.00px;font-size:20.5px;line-height:20.5px;color:#217346;-webkit-text-stroke:0.12px #217346;">9</span>
<span class="t" style="left:12.52px;top:664.00px;font-size:20.5px;line-height:20.5px;color:#217346;letter-spacing:-1.000px;-webkit-text-stroke:0.12px #217346;">10</span>
<span class="t" style="left:13.24px;top:698.00px;font-size:20.5px;line-height:20.5px;color:#217346;letter-spacing:-1.000px;-webkit-text-stroke:0.12px #217346;">11</span>
<span class="t" style="left:12.52px;top:733.00px;font-size:20.5px;line-height:20.5px;color:#262626;letter-spacing:-1.000px;-webkit-text-stroke:0.12px #262626;">12</span>
<span class="t" style="left:12.52px;top:767.00px;font-size:20.5px;line-height:20.5px;color:#262626;letter-spacing:-1.000px;-webkit-text-stroke:0.12px #262626;">13</span>
<span class="t" style="left:48.80px;top:345.00px;font-size:21.6px;line-height:21.6px;color:#101010;letter-spacing:0.968px;-webkit-text-stroke:0.45px #101010;">Actor's Name</span>
<span class="t" style="left:336.00px;top:345.00px;font-size:21.6px;line-height:21.6px;color:#101010;letter-spacing:1.699px;-webkit-text-stroke:0.45px #101010;">Telephone Number</span>
<span class="t" style="left:49.20px;top:388.00px;font-size:21.6px;line-height:21.6px;color:#101010;letter-spacing:0.846px;-webkit-text-stroke:0.45px #101010;">Tom Cruise</span>
<span class="t" style="left:426.60px;top:388.00px;font-size:21.6px;line-height:21.6px;color:#101010;letter-spacing:0.011px;-webkit-text-stroke:0.45px #101010;">164.655.5389</span>
<span class="t" style="left:48.20px;top:422.00px;font-size:21.6px;line-height:21.6px;color:#101010;letter-spacing:1.488px;-webkit-text-stroke:0.45px #101010;">Will Smith</span>
<span class="t" style="left:426.60px;top:422.00px;font-size:21.6px;line-height:21.6px;color:#101010;letter-spacing:0.011px;-webkit-text-stroke:0.45px #101010;">164.655.5409</span>
<span class="t" style="left:48.20px;top:457.00px;font-size:21.6px;line-height:21.6px;color:#101010;letter-spacing:0.929px;-webkit-text-stroke:0.45px #101010;">Leonardo DiCaprio</span>
<span class="t" style="left:426.60px;top:457.00px;font-size:21.6px;line-height:21.6px;color:#101010;letter-spacing:0.011px;-webkit-text-stroke:0.45px #101010;">164.655.5558</span>
<span class="t" style="left:48.80px;top:491.00px;font-size:21.6px;line-height:21.6px;color:#101010;letter-spacing:0.920px;-webkit-text-stroke:0.45px #101010;">Brad Pitt</span>
<span class="t" style="left:426.60px;top:491.00px;font-size:21.6px;line-height:21.6px;color:#101010;letter-spacing:0.011px;-webkit-text-stroke:0.45px #101010;">164.655.5669</span>
<span class="t" style="left:47.60px;top:525.00px;font-size:21.6px;line-height:21.6px;color:#101010;letter-spacing:1.007px;-webkit-text-stroke:0.45px #101010;">Johnny Depp</span>
<span class="t" style="left:426.60px;top:525.00px;font-size:21.6px;line-height:21.6px;color:#101010;letter-spacing:0.011px;-webkit-text-stroke:0.45px #101010;">164.655.5391</span>
<span class="t" style="left:48.80px;top:560.00px;font-size:21.6px;line-height:21.6px;color:#101010;letter-spacing:0.971px;-webkit-text-stroke:0.45px #101010;">Robert Downey Jr.</span>
<span class="t" style="left:426.60px;top:560.00px;font-size:21.6px;line-height:21.6px;color:#101010;letter-spacing:0.011px;-webkit-text-stroke:0.45px #101010;">164.655.5446</span>
<span class="t" style="left:48.80px;top:594.00px;font-size:21.6px;line-height:21.6px;color:#101010;letter-spacing:0.918px;-webkit-text-stroke:0.45px #101010;">Dwayne Johnson</span>
<span class="t" style="left:426.60px;top:594.00px;font-size:21.6px;line-height:21.6px;color:#101010;letter-spacing:0.011px;-webkit-text-stroke:0.45px #101010;">164.655.5800</span>
<span class="t" style="left:48.20px;top:629.00px;font-size:21.6px;line-height:21.6px;color:#101010;letter-spacing:0.925px;-webkit-text-stroke:0.45px #101010;">Tom Hanks</span>
<span class="t" style="left:426.60px;top:629.00px;font-size:21.6px;line-height:21.6px;color:#101010;letter-spacing:0.011px;-webkit-text-stroke:0.45px #101010;">164.666.6471</span>
<span class="t" style="left:48.80px;top:663.00px;font-size:21.6px;line-height:21.6px;color:#101010;letter-spacing:0.375px;-webkit-text-stroke:0.45px #101010;">Hugh Jackman</span>
<span class="t" style="left:426.60px;top:663.00px;font-size:21.6px;line-height:21.6px;color:#101010;letter-spacing:0.011px;-webkit-text-stroke:0.45px #101010;">164.622.2510</span>
<span class="t" style="left:48.20px;top:697.00px;font-size:21.6px;line-height:21.6px;color:#101010;letter-spacing:1.169px;-webkit-text-stroke:0.45px #101010;">Vin Diesel</span>
<span class="t" style="left:426.60px;top:697.00px;font-size:21.6px;line-height:21.6px;color:#101010;letter-spacing:0.011px;-webkit-text-stroke:0.45px #101010;">164.655.5712</span>
<span class="t" style="left:499.60px;top:132.00px;font-size:24px;line-height:24px;color:#707070;-webkit-text-stroke:0.45px #707070;">A</span>
<span class="t" style="left:483.00px;top:82.00px;font-size:24.5px;line-height:24.5px;color:#6a6a6a;-webkit-text-stroke:0.45px #6a6a6a;">A</span>
<span class="t" style="left:526.20px;top:86.00px;font-size:19.5px;line-height:19.5px;color:#6a6a6a;-webkit-text-stroke:0.45px #6a6a6a;">A</span>
<span class="t" style="left:1138.00px;top:134.00px;font-size:26.5px;line-height:26.5px;color:#555;-webkit-text-stroke:0.45px #555;">%</span>
<span class="t" style="left:1242.00px;top:133.00px;font-size:12.2px;line-height:12.2px;color:#555;letter-spacing:0.213px;-webkit-text-stroke:0.45px #555;">.0</span>
<span class="t" style="left:1232.80px;top:146.00px;font-size:12.2px;line-height:12.2px;color:#555;letter-spacing:1.321px;-webkit-text-stroke:0.45px #555;">.00</span>
<span class="t" style="left:1274.40px;top:133.00px;font-size:12.2px;line-height:12.2px;color:#555;letter-spacing:1.421px;-webkit-text-stroke:0.45px #555;">.00</span>
<span class="t" style="left:1283.60px;top:146.00px;font-size:12.2px;line-height:12.2px;color:#555;letter-spacing:0.413px;-webkit-text-stroke:0.45px #555;">.0</span>
<span class="t" style="left:392.40px;top:240.00px;font-size:24px;line-height:24px;color:#606060;font-style:italic;font-family:'Liberation Serif',serif;-webkit-text-stroke:0.55px #606060;">f</span>
<span class="t" style="left:401.04px;top:248.00px;font-size:16px;line-height:16px;color:#606060;font-weight:bold;font-style:italic;font-family:'Liberation Serif',serif;-webkit-text-stroke:0.3px #606060;">x</span>
</div></div></body></html>
